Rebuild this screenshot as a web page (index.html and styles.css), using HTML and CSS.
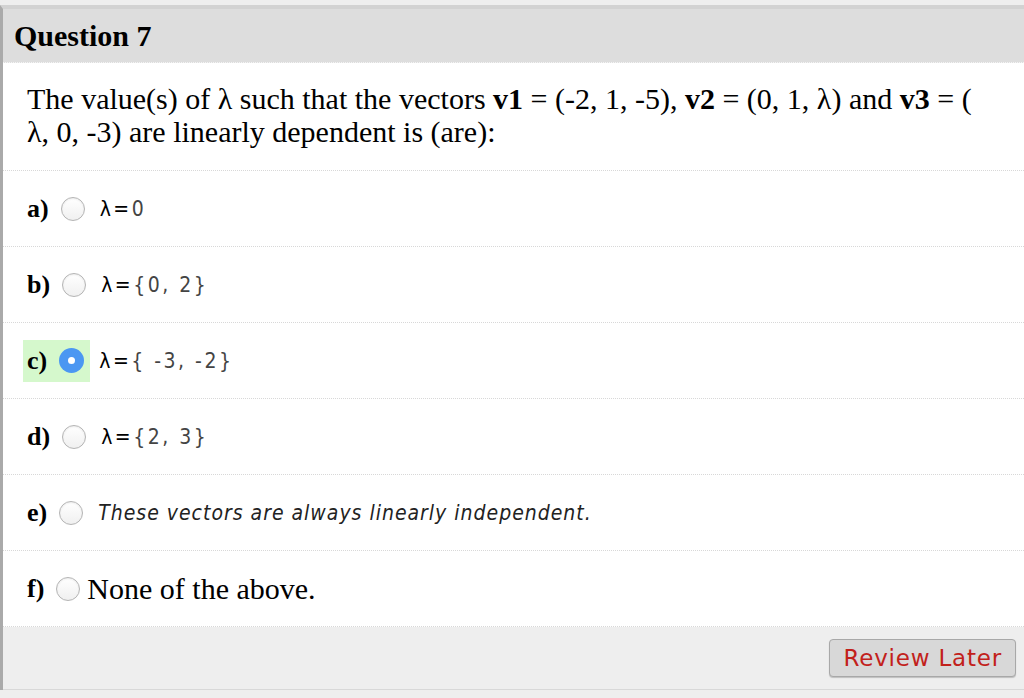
FILE: index.html
```html
<!DOCTYPE html>
<html lang="en">
<head>
    <meta charset="UTF-8">
    <title>Question 7</title>
    <link rel="stylesheet" href="styles.css">
</head>
<body>
    <div class="question">
        <div class="question-header">
            <h2>Question 7</h2>
        </div>

        <div class="question-text">
            The value(s) of &lambda; such that the vectors <b>v1</b> = (-2, 1, -5), <b>v2</b> = (0, 1, &lambda;) and <b>v3</b> = ( &lambda;, 0, -3) are linearly dependent is (are):
        </div>

        <div class="choice">
            <span class="choice-label"><b>a)</b> <span class="radio"></span></span>
            <span class="math">&lambda;=<span class="num">0</span></span>
        </div>
        <div class="choice">
            <span class="choice-label"><b>b)</b> <span class="radio"></span></span>
            <span class="math">&lambda;=<span class="num">{0, 2}</span></span>
        </div>
        <div class="choice">
            <span class="choice-label selected"><b>c)</b> <span class="radio checked"></span></span>
            <span class="math">&lambda;=<span class="num">{ -3, -2}</span></span>
        </div>
        <div class="choice">
            <span class="choice-label"><b>d)</b> <span class="radio"></span></span>
            <span class="math">&lambda;=<span class="num">{2, 3}</span></span>
        </div>
        <div class="choice">
            <span class="choice-label"><b>e)</b> <span class="radio"></span></span>
            <span class="italic-text">These vectors are always linearly independent.</span>
        </div>
        <div class="choice">
            <span class="choice-label tight"><b>f)</b> <span class="radio"></span></span>
            <span class="plain">None of the above.</span>
        </div>

        <div class="question-footer">
            <button class="review-btn">Review Later</button>
        </div>
    </div>
</body>
</html>
```

FILE: styles.css
```css
body {
    margin: 0;
    background: #eeeeee;
    font-family: "Liberation Serif", "Times New Roman", serif;
    color: #000;
}

.question {
    margin-top: 5px;
    border-top: 4px solid #d2d2d2;
    border-left: 3px solid #aaaaaa;
    background: #fff;
    height: 681px;
}

.question-header {
    background: #dddddd;
    height: 53px;
    padding-left: 11px;
    border-bottom: 1px dotted #f4f4f4;
    display: flex;
    align-items: center;
}

.question-header h2 {
    margin: 0;
    font-size: 30px;
    font-weight: bold;
}

.question-text {
    font-size: 30px;
    line-height: 33px;
    padding: 19px 30px 22px 24px;
    border-bottom: 1px dotted #d8d8d8;
}

.choice {
    height: 75px;
    display: flex;
    align-items: center;
    padding-left: 20px;
    border-bottom: 1px dotted #d8d8d8;
    font-size: 26px;
}

.choice-label {
    display: flex;
    align-items: center;
    gap: 12px;
    padding: 6px 6px 6px 4px;
    margin-right: 9px;
}

.choice-label.tight {
    padding-right: 0;
    margin-right: 7px;
}

.choice-label.selected {
    background: #d5f8cc;
}

.radio {
    width: 24px;
    height: 24px;
    border-radius: 50%;
    border: 1px solid #b4b4b4;
    box-sizing: border-box;
    background: linear-gradient(#ffffff, #f0f0f0);
    box-shadow: inset 0 1px 2px rgba(0,0,0,0.08);
    display: inline-block;
    position: relative;
}

.radio.checked {
    border: none;
    width: 25px;
    height: 25px;
    background: #4b97f2;
    box-shadow: none;
}

.radio.checked::after {
    content: "";
    position: absolute;
    left: 9px;
    top: 9px;
    width: 7px;
    height: 7px;
    border-radius: 50%;
    background: #fff;
}

.math {
    font-family: "DejaVu Sans Condensed", "DejaVu Sans", sans-serif;
    font-stretch: condensed;
    font-size: 21px;
    letter-spacing: 2.5px;
}

.math .num {
    color: #444;
}

.italic-text {
    font-family: "DejaVu Sans Condensed", "DejaVu Sans", sans-serif;
    font-style: italic;
    font-size: 21px;
    letter-spacing: 1px;
    color: #222;
}

.plain {
    font-size: 30px;
}

.question-footer {
    background: #eeeeee;
    height: 62px;
    display: flex;
    align-items: center;
    justify-content: flex-end;
    padding-right: 8px;
    border-bottom: 2px solid #d8d8d8;
}

.review-btn {
    font-family: "DejaVu Sans", sans-serif;
    font-size: 23px;
    letter-spacing: 0.8px;
    color: #c2211b;
    background: #d8d8d8;
    border: 1px solid #a8a8a8;
    border-radius: 4px;
    box-shadow: 0 1px 1px rgba(0,0,0,0.2);
    padding: 0 13px;
    height: 38px;
}
```
